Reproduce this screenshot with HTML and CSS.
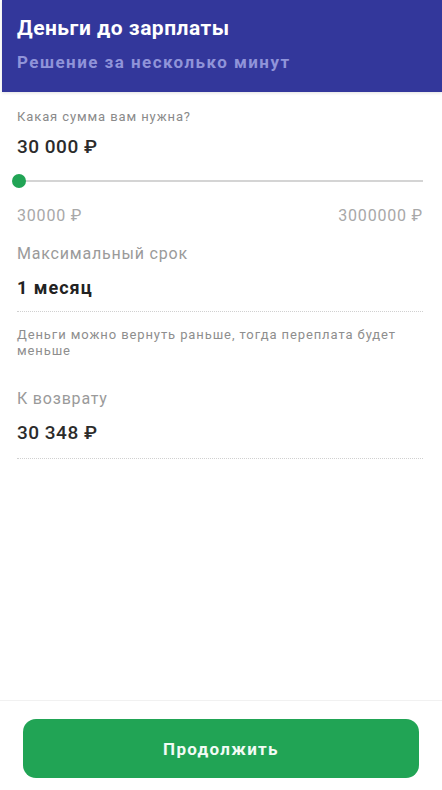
FILE: index.html
```html
<!DOCTYPE html>
<html lang="ru">
<head>
<meta charset="utf-8">
<title>Деньги до зарплаты</title>
<link rel="stylesheet" href="styles.css">
</head>
<body>
<div class="screen">
  <header class="header">
    <h1 class="title">Деньги до зарплаты</h1>
    <p class="subtitle">Решение за несколько минут</p>
  </header>
  <main class="content">
    <div class="label-small">Какая сумма вам нужна?</div>
    <div class="amount">30 000 ₽</div>
    <div class="slider">
      <div class="track"></div>
      <div class="thumb"></div>
    </div>
    <div class="range">
      <span>30000 ₽</span>
      <span>3000000 ₽</span>
    </div>
    <div class="field">
      <div class="field-label">Максимальный срок</div>
      <div class="field-value bold">1 месяц</div>
    </div>
    <p class="hint">Деньги можно вернуть раньше, тогда переплата будет меньше</p>
    <div class="field field-return">
      <div class="field-label">К возврату</div>
      <div class="field-value">30 348 ₽</div>
    </div>
  </main>
  <footer class="footer">
    <button class="btn">Продолжить</button>
  </footer>
</div>
</body>
</html>
```
FILE: styles.css
```css
* { box-sizing: border-box; }
html, body { margin: 0; padding: 0; }
body {
  background: #fff;
  font-family: Roboto, "Noto Sans", "Liberation Sans", sans-serif;
  width: 442px;
  height: 790px;
  overflow: hidden;
}
.screen {
  display: flex;
  flex-direction: column;
  height: 790px;
}
.header {
  background: #33379b;
  height: 92px;
  margin-left: 2px;
  padding: 14px 0 0 15px;
  box-shadow: 0 1px 3px rgba(0,0,0,0.12);
}
.title {
  margin: 0;
  color: #fff;
  font-size: 21px;
  font-weight: 700;
  line-height: 28px;
  letter-spacing: 0.5px;
}
.subtitle {
  margin: 9px 0 0;
  color: #9094d9;
  font-size: 17px;
  font-weight: 700;
  line-height: 22px;
  letter-spacing: 1.45px;
}
.content {
  flex: 1;
  padding: 17px 19px 0 17px;
}
.label-small {
  color: #8a8a8a;
  font-size: 13px;
  line-height: 16px;
  letter-spacing: 0.9px;
}
.amount {
  margin-top: 10px;
  color: #2b2b2b;
  font-size: 19px;
  font-weight: 500;
  line-height: 24px;
  letter-spacing: 0.5px;
}
.slider {
  position: relative;
  height: 14px;
  margin-top: 15px;
}
.track {
  position: absolute;
  left: 1px;
  right: 0;
  top: 6px;
  height: 2px;
  background: #d4d4d4;
}
.thumb {
  position: absolute;
  left: -5px;
  top: 0;
  width: 14px;
  height: 14px;
  border-radius: 50%;
  background: #21a455;
}
.range {
  display: flex;
  justify-content: space-between;
  margin-top: 18px;
  color: #a8a8a8;
  font-size: 16px;
  line-height: 20px;
  letter-spacing: 0.8px;
}
.field {
  margin-top: 18px;
  padding-bottom: 12px;
  border-bottom: 1px dotted #d0d0d0;
}
.field-label {
  color: #9a9a9a;
  font-size: 16px;
  line-height: 20px;
  letter-spacing: 0.8px;
}
.field-value {
  margin-top: 13px;
  color: #2b2b2b;
  font-size: 19px;
  font-weight: 500;
  line-height: 22px;
  letter-spacing: 0.5px;
}
.field-value.bold { font-weight: 700; color: #222; font-size: 18px; letter-spacing: 1px; }
.hint {
  margin: 15px 0 0;
  color: #8e8e8e;
  font-size: 13px;
  line-height: 16px;
  letter-spacing: 0.9px;
}
.field-return { margin-top: 30px; padding-bottom: 14px; }
.footer {
  border-top: 1px solid #f1f1f1;
  padding: 18px 23px 12px 23px;
}
.btn {
  display: block;
  width: 396px;
  height: 59px;
  border: none;
  border-radius: 13px;
  background: #21a455;
  color: #f2fbf5;
  font-family: Roboto, "Noto Sans", "Liberation Sans", sans-serif;
  font-size: 17px;
  font-weight: 700;
  letter-spacing: 1.3px;
}
```
